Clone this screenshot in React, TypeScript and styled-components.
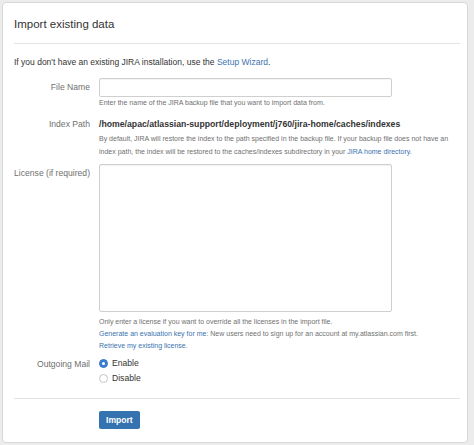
import React, { useState } from "react";
import styled, { createGlobalStyle } from "styled-components";

const GlobalStyle = createGlobalStyle`
  html, body {
    margin: 0;
    padding: 0;
    background: #ececec;
  }
  body {
    font-family: "Liberation Sans", Arial, Helvetica, sans-serif;
    color: #333;
  }
`;

const Card = styled.div`
  box-sizing: border-box;
  width: 466px;
  margin: 2px 0 0 2px;
  padding: 0 7px 13px 11px;
  background: #fff;
  border: 1px solid #d8d8d8;
  border-radius: 4px;
`;

const Header = styled.div`
  padding: 13px 0 11px 0;
  border-bottom: 1px solid #e2e2e2;
`;

const Title = styled.h1`
  margin: 0;
  font-size: 11.5px;
  font-weight: normal;
  line-height: 16px;
  color: #333;
`;

const Intro = styled.p`
  margin: 12px 0 0 0;
  font-size: 8.5px;
  line-height: 12px;
  color: #333;
`;

const Link = styled.a`
  color: #3b73af;
  text-decoration: none;
`;

const Form = styled.div`
  display: grid;
  grid-template-columns: 76px 1fr;
  column-gap: 9px;
  margin-top: 10px;
`;

const Label = styled.label<{ $top?: number }>`
  text-align: right;
  font-size: 8.6px;
  line-height: 12px;
  color: #707070;
  padding-top: ${(p) => p.$top ?? 0}px;
  white-space: nowrap;
`;

const Field = styled.div<{ $gap?: number }>`
  margin-bottom: ${(p) => p.$gap ?? 0}px;
`;

const TextInput = styled.input`
  box-sizing: border-box;
  display: block;
  width: 293px;
  height: 19px;
  margin: 0;
  border: 1px solid #cfcfcf;
  border-radius: 2px;
  box-shadow: inset 0 1px 1px rgba(0, 0, 0, 0.05);
  outline: none;
`;

const TextArea = styled.textarea`
  box-sizing: border-box;
  display: block;
  width: 293px;
  height: 148px;
  margin: 0;
  border: 1px solid #cfcfcf;
  border-radius: 2px;
  box-shadow: inset 0 1px 1px rgba(0, 0, 0, 0.05);
  resize: none;
  outline: none;
`;

const Help = styled.div<{ $top?: number; $line?: number }>`
  margin-top: ${(p) => p.$top ?? 0}px;
  font-size: 7px;
  line-height: ${(p) => p.$line ?? 12.5}px;
  color: #707070;
`;

const PathValue = styled.div`
  font-size: 8.7px;
  line-height: 12px;
  font-weight: bold;
  color: #333;
`;

const RadioRow = styled.label`
  display: flex;
  align-items: center;
  gap: 4px;
  height: 15px;
  font-size: 8.6px;
  color: #333;
  cursor: pointer;
`;

const RadioDot = styled.span<{ $checked: boolean }>`
  box-sizing: border-box;
  width: 9px;
  height: 9px;
  border-radius: 50%;
  background: ${(p) => (p.$checked ? "#3b7fd4" : "#fff")};
  border: 1px solid ${(p) => (p.$checked ? "#3576c8" : "#c4c4c4")};
  display: flex;
  align-items: center;
  justify-content: center;
  &::after {
    content: "";
    width: 3px;
    height: 3px;
    border-radius: 50%;
    background: #fff;
    display: ${(p) => (p.$checked ? "block" : "none")};
  }
`;

const Footer = styled.div`
  margin-top: 12px;
  padding-top: 10px;
  border-top: 1px solid #e2e2e2;
  padding-left: 85px;
`;

const Button = styled.button`
  height: 18px;
  padding: 0 7px;
  border: none;
  border-radius: 2px;
  background: #3572b0;
  color: #fff;
  font-family: inherit;
  font-size: 8.6px;
  font-weight: bold;
  cursor: pointer;
`;

export default function App() {
  const [mail, setMail] = useState("enable");

  return (
    <>
      <GlobalStyle />
      <Card>
        <Header>
          <Title>Import existing data</Title>
        </Header>
        <Intro>
          If you don't have an existing JIRA installation, use the{" "}
          <Link href="#">Setup Wizard</Link>.
        </Intro>
        <Form>
          <Label $top={3}>File Name</Label>
          <Field $gap={8}>
            <TextInput type="text" />
            <Help>
              Enter the name of the JIRA backup file that you want to import
              data from.
            </Help>
          </Field>

          <Label>Index Path</Label>
          <Field $gap={6}>
            <PathValue>
              /home/apac/atlassian-support/deployment/j760/jira-home/caches/indexes
            </PathValue>
            <Help $top={2} $line={13}>
              By default, JIRA will restore the index to the path specified in
              the backup file. If your backup file does not have an index path,
              the index will be restored to the caches/indexes subdirectory in
              your <Link href="#">JIRA home directory</Link>.
            </Help>
          </Field>

          <Label $top={3}>License (if required)</Label>
          <Field $gap={4}>
            <TextArea />
            <Help $top={4} $line={12}>
              Only enter a license if you want to override all the licenses in
              the import file.
              <br />
              <Link href="#">Generate an evaluation key for me</Link>: New users
              need to sign up for an account at my.atlassian.com first.
              <br />
              <Link href="#">Retrieve my existing license</Link>.
            </Help>
          </Field>

          <Label $top={2}>Outgoing Mail</Label>
          <Field>
            <RadioRow onClick={() => setMail("enable")}>
              <RadioDot $checked={mail === "enable"} />
              Enable
            </RadioRow>
            <RadioRow onClick={() => setMail("disable")}>
              <RadioDot $checked={mail === "disable"} />
              Disable
            </RadioRow>
          </Field>
        </Form>
        <Footer>
          <Button>Import</Button>
        </Footer>
      </Card>
    </>
  );
}
